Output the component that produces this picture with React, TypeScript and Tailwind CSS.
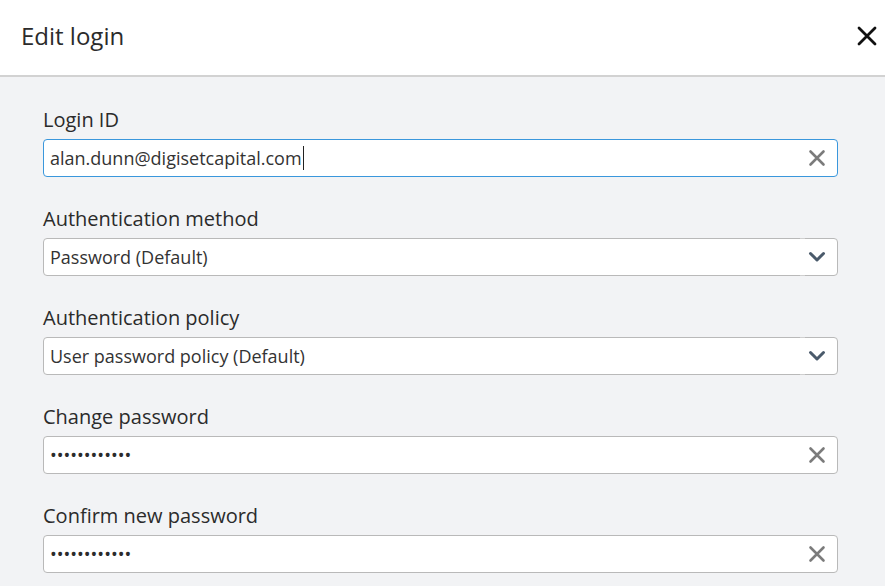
import React from "react";

const font = { fontFamily: '"Open Sans", "Noto Sans", sans-serif' };

function ClearIcon() {
  return (
    <svg width="18" height="18" viewBox="0 0 18 18" className="shrink-0">
      <path d="M2.5 2.5 L15.5 15.5 M15.5 2.5 L2.5 15.5" stroke="#7b7b7b" strokeWidth="2.6" strokeLinecap="round" />
    </svg>
  );
}

function Chevron() {
  return (
    <svg width="18" height="12" viewBox="0 0 18 12" className="shrink-0">
      <path d="M2.5 2.5 L9 9 L15.5 2.5" stroke="#4a5a6b" strokeWidth="3" fill="none" strokeLinecap="round" strokeLinejoin="round" />
    </svg>
  );
}

interface FieldProps {
  label: string;
  value: string;
  kind: "text" | "select" | "password";
  focused?: boolean;
}

function Field({ label, value, kind, focused }: FieldProps) {
  return (
    <div className="flex flex-col">
      <label className="text-[20px] leading-[24px] text-[#2b2b2b] mb-[7px]">{label}</label>
      <div
        className={`relative w-[795px] h-[38px] bg-white rounded-[4px] border flex items-center pl-[6px] pr-[11px] ${
          focused ? "border-[#3a97dc]" : "border-[#b9b9b9]"
        }`}
      >
        <div className="flex-1 flex items-center text-[18px] text-[#333333] whitespace-nowrap">
          {kind === "password" ? (
            <span className="text-[18px] text-[#2b2b2b]">{value}</span>
          ) : (
            <span>{value}</span>
          )}
          {focused && <span className="inline-block w-px h-[24px] bg-[#222] ml-[1px]" />}
        </div>
        {kind === "select" ? (
          <>
            <span className="absolute left-[756px] -top-px w-[5px] h-px bg-[#cfcfcf]" />
            <span className="absolute left-[756px] -bottom-px w-[5px] h-px bg-[#cfcfcf]" />
            <Chevron />
          </>
        ) : (
          <ClearIcon />
        )}
      </div>
    </div>
  );
}

export default function App() {
  return (
    <div className="w-full h-[586px] bg-[#f2f3f5] flex flex-col overflow-hidden" style={font}>
      <header className="h-[77px] shrink-0 bg-white border-b-2 border-[#d2d2d2] flex items-center justify-between pl-[21px] pr-[7px]">
        <h1 className="text-[24px] text-[#2b2b2b] leading-none -mt-[3px]">Edit login</h1>
        <button className="w-[22px] h-[22px] flex items-center justify-center -mt-[3px]">
          <svg width="20" height="20" viewBox="0 0 20 20">
            <path d="M2 2 L18 18 M18 2 L2 18" stroke="#111" strokeWidth="2.8" strokeLinecap="round" />
          </svg>
        </button>
      </header>
      <main className="flex flex-col gap-[30px] pl-[43px] pt-[31px]">
        <Field label="Login ID" value="alan.dunn@digisetcapital.com" kind="text" focused />
        <Field label="Authentication method" value="Password (Default)" kind="select" />
        <Field label="Authentication policy" value="User password policy (Default)" kind="select" />
        <Field label="Change password" value="••••••••••••" kind="password" />
        <Field label="Confirm new password" value="••••••••••••" kind="password" />
      </main>
    </div>
  );
}
